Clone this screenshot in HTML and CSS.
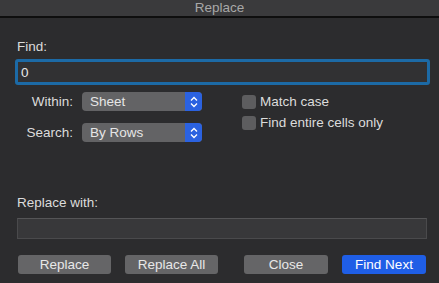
FILE: index.html
```html
<!DOCTYPE html>
<html lang="en">
<head>
    <meta charset="UTF-8">
    <title>Replace</title>
    <link rel="stylesheet" href="styles.css">
</head>
<body>
    <div class="titlebar">Replace</div>

    <div class="dialog">
        <label class="field-label" for="findInput">Find:</label>
        <input class="find-input" id="findInput" type="text" value="0">

        <div class="options">
            <div class="selects">
                <div class="select-row">
                    <span class="select-label">Within:</span>
                    <div class="popup">
                        <span class="popup-value">Sheet</span>
                        <span class="popup-arrows">
                            <svg width="8" height="12" viewBox="0 0 8 12"><path d="M1 4.5 L4 1.5 L7 4.5 M1 7.5 L4 10.5 L7 7.5" fill="none" stroke="#fff" stroke-width="1.3"/></svg>
                        </span>
                    </div>
                </div>
                <div class="select-row">
                    <span class="select-label">Search:</span>
                    <div class="popup">
                        <span class="popup-value">By Rows</span>
                        <span class="popup-arrows">
                            <svg width="8" height="12" viewBox="0 0 8 12"><path d="M1 4.5 L4 1.5 L7 4.5 M1 7.5 L4 10.5 L7 7.5" fill="none" stroke="#fff" stroke-width="1.3"/></svg>
                        </span>
                    </div>
                </div>
            </div>
            <div class="checks">
                <label class="check"><span class="box"></span>Match case</label>
                <label class="check"><span class="box"></span>Find entire cells only</label>
            </div>
        </div>

        <label class="field-label replace-label" for="replaceInput">Replace with:</label>
        <input class="replace-input" id="replaceInput" type="text">

        <div class="buttons">
            <div class="btn-group">
                <button class="btn">Replace</button>
                <button class="btn">Replace All</button>
            </div>
            <div class="btn-group">
                <button class="btn btn-close">Close</button>
                <button class="btn btn-close primary">Find Next</button>
            </div>
        </div>
    </div>
</body>
</html>
```

FILE: styles.css
```css
* {
    margin: 0;
    padding: 0;
    box-sizing: border-box;
}

body {
    font-family: 'Liberation Sans', Arial, sans-serif;
    font-size: 13.5px;
    background-color: #2c2c2e;
    color: #dcdcdc;
    width: 439px;
    height: 283px;
    overflow: hidden;
}

.titlebar {
    height: 18px;
    line-height: 16px;
    text-align: center;
    background-color: #3a3a3c;
    border-bottom: 2px solid #0e0e0e;
    color: #a8a8a8;
    font-size: 13.5px;
}

.dialog {
    padding: 21px 10px 0 15px;
}

.field-label {
    display: block;
    padding-left: 2px;
    height: 20px;
}

.find-input {
    display: block;
    width: 415px;
    height: 26px;
    border: 3px solid #1c6aa6;
    border-radius: 3px;
    background-color: #313133;
    color: #e8e8e8;
    font-family: inherit;
    font-size: 13.5px;
    padding: 0 3px;
    outline: none;
}

.options {
    display: flex;
    margin-top: 7px;
    height: 103px;
}

.selects {
    display: flex;
    flex-direction: column;
    gap: 12px;
    width: 227px;
}

.select-row {
    display: flex;
    align-items: center;
    height: 19px;
}

.select-label {
    width: 67px;
    text-align: right;
    padding-right: 9px;
}

.popup {
    display: flex;
    width: 120px;
    height: 19px;
    background-color: #636365;
    border-radius: 4px;
    overflow: hidden;
}

.popup-value {
    flex: 1;
    padding-left: 8px;
    line-height: 19px;
    color: #e6e6e6;
}

.popup-arrows {
    width: 17px;
    background-color: #2b62e0;
    display: flex;
    align-items: center;
    justify-content: center;
}

.checks {
    display: flex;
    flex-direction: column;
    gap: 6px;
    padding-top: 2px;
}

.check {
    display: flex;
    align-items: center;
    height: 15px;
    gap: 4px;
}

.box {
    width: 14px;
    height: 14px;
    border-radius: 3px;
    background-color: #5d5d5f;
}

.replace-label {
    height: 23px;
}

.replace-input {
    display: block;
    width: 410px;
    height: 21px;
    margin-left: 2px;
    background-color: #38383a;
    border: 1px solid #4a4a4c;
    border-top-color: #555557;
    outline: none;
}

.buttons {
    display: flex;
    justify-content: space-between;
    margin-top: 16px;
    padding: 0 0 0 3px;
    width: 411px;
}

.btn-group {
    display: flex;
    gap: 14px;
}

.btn {
    width: 93px;
    height: 19px;
    border: none;
    border-radius: 3px;
    background-color: #656567;
    color: #e8e8e8;
    font-family: inherit;
    font-size: 13.5px;
}

.btn-close {
    width: 84px;
}

.primary {
    background-color: #1f5ee6;
    color: #fff;
}
```
